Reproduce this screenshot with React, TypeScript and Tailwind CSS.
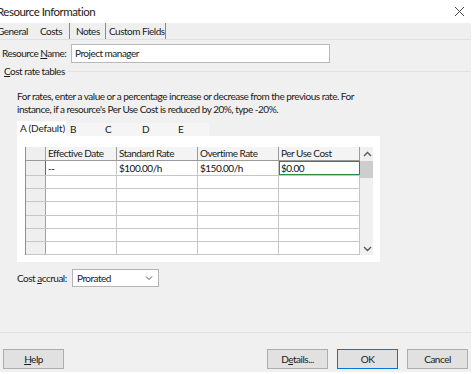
import React from 'react';

const font = { fontFamily: 'Lato, "Noto Sans", sans-serif' };

const cols = ['Effective Date', 'Standard Rate', 'Overtime Rate', 'Per Use Cost'];
const widths = ['w-[71px]', 'w-[81px]', 'w-[81px]', 'w-[81px]'];

const GridRow = ({ cells, first, h }: { cells: string[]; first?: boolean; h: string }) => (
  <div className={`flex ${h} border-b border-[#c6c6c6]`}>
    <div className={`w-[20px] bg-[#efefef] border-r ${first ? 'border-[#2e8b3e]' : 'border-[#a0a0a0]'}`} />
    {cells.map((c, i) => (
      <div
        key={i}
        className={`${widths[i]} border-r border-[#c6c6c6] px-[2px] text-[10px] leading-[14px] whitespace-nowrap text-[#111] ${
          first && i === 3 ? 'outline outline-[#2e8b3e] -outline-offset-1 bg-white' : ''
        }`}
      >
        {c}
      </div>
    ))}
  </div>
);

export default function App() {
  const empty = ['', '', '', ''];
  return (
    <div
      className="w-[474px] h-[374px] bg-white text-[#1a1a1a] overflow-hidden whitespace-nowrap tracking-[-0.5px]"
      style={font}
    >
      <div className="h-[23px] flex items-center justify-between pr-[8px]">
        <span className="-ml-[3px] text-[11.5px] text-[#222]">Resource Information</span>
        <svg width="11" height="11" viewBox="0 0 11 11" className="mr-[1px]">
          <path d="M1 1 L10 10 M10 1 L1 10" stroke="#444" strokeWidth="1" />
        </svg>
      </div>
      <div className="w-[471px] h-[349px] bg-[#f0f0f0] flex flex-col">
        <div className="h-[17px] flex items-center text-[10px] border-b border-[#e0e0e0] bg-[#efefef]">
          <span className="-ml-[3px] w-[43px]">General</span>
          <span className="w-[29px]">Costs</span>
          <span className="h-[16px] border-l border-[#8a8a8a]" />
          <span className="w-[35px] pl-[6px]">Notes</span>
          <span className="h-[16px] border-l border-[#8a8a8a]" />
          <span className="w-[59px] pl-[3px]">Custom Fields</span>
          <span className="h-[16px] border-l border-[#8a8a8a]" />
        </div>
        <div className="h-[26px] flex items-center text-[10px]">
          <span className="ml-[2px] w-[69px]">
            Resource <u>N</u>ame:
          </span>
          <div className="w-[259px] h-[19px] bg-white border border-[#b9b9b9] px-[3px] leading-[17px]">
            Project manager
          </div>
        </div>
        <div className="flex items-center h-[10px] text-[10px] leading-[10px]">
          <span className="pl-[4px] pr-[3px] bg-[#f0f0f0]">
            <u>C</u>ost rate tables
          </span>
          <div className="flex-1 border-t border-[#e0e0e0]" />
        </div>
        <div className="px-[17px] pt-[14px] text-[10px] leading-[13px] text-[#1a1a1a]">
          <p>For rates, enter a value or a percentage increase or decrease from the previous rate. For</p>
          <p>instance, if a resource's Per Use Cost is reduced by 20%, type -20%.</p>
        </div>
        <div className="ml-[17px] mt-[5px] flex items-end h-[15px] text-[10px] leading-[14px]">
          <div className="w-[49px] h-[15px] bg-white pl-[3px] tracking-[-0.2px]">A (Default)</div>
          <div className="w-[143px] h-[13px] leading-[13px] bg-[#f5f5f5] flex">
            <span className="w-[36px] pl-[4px]">B</span>
            <span className="w-[36px] pl-[3px]">C</span>
            <span className="w-[36px] pl-[4px]">D</span>
            <span className="w-[35px] pl-[4px]">E</span>
          </div>
        </div>
        <div className="ml-[17px] w-[363px] h-[126px] bg-white pt-[11px] pl-[8px]">
          <div className="flex w-[348px] h-[108px] overflow-hidden border-l border-[#8f8f8f]">
            <div className="flex flex-col">
              <div className="flex h-[14px] border-b border-[#9a9a9a]">
                <div className="w-[20px] bg-[#efefef] border-r border-[#a0a0a0]" />
                {cols.map((c, i) => (
                  <div
                    key={c}
                    className={`${widths[i]} bg-[#f4f4f4] border-r border-[#9a9a9a] px-[2px] text-[10px] leading-[13px]`}
                  >
                    {c}
                  </div>
                ))}
              </div>
              <GridRow cells={['--', '$100.00/h', '$150.00/h', '$0.00']} first h="h-[15px]" />
              {[0, 1, 2, 3, 4].map((i) => (
                <GridRow key={i} cells={empty} h="h-[14px]" />
              ))}
              <GridRow cells={empty} h="h-[14px]" />
            </div>
            <div className="w-[14px] bg-[#f0f0f0] flex flex-col items-center">
              <svg width="9" height="14" viewBox="0 0 9 14">
                <path d="M1 9 L4.5 5.5 L8 9" stroke="#555" strokeWidth="1.3" fill="none" />
              </svg>
              <div className="w-[14px] h-[17px] bg-[#cdcdcd]" />
              <div className="flex-1" />
              <svg width="9" height="12" viewBox="0 0 9 12">
                <path d="M1 4 L4.5 7.5 L8 4" stroke="#555" strokeWidth="1.3" fill="none" />
              </svg>
            </div>
          </div>
        </div>
        <div className="flex items-center ml-[17px] mt-[7px] h-[18px] text-[10px]">
          <span className="w-[55px]">
            Cost <u>a</u>ccrual:
          </span>
          <div className="w-[87px] h-[18px] bg-white border border-[#b4b4b4] flex items-center justify-between pl-[4px] pr-[5px]">
            <span>Prorated</span>
            <svg width="8" height="6" viewBox="0 0 8 6">
              <path d="M1 1.5 L4 4.5 L7 1.5" stroke="#555" strokeWidth="1" fill="none" />
            </svg>
          </div>
        </div>
        <div className="mt-[45px] border-t border-[#e2e2e2]" />
        <div className="mt-[16px] flex items-center text-[10px]">
          <button className="ml-[3px] w-[61px] h-[20px] bg-[#e1e1e1] border border-[#adadad]">
            <u>H</u>elp
          </button>
          <div className="flex-1" />
          <button className="w-[61px] h-[20px] bg-[#e1e1e1] border border-[#adadad]">
            D<u>e</u>tails...
          </button>
          <button className="ml-[9px] w-[61px] h-[20px] bg-[#e1e1e1] border border-[#0078d7]">OK</button>
          <button className="ml-[9px] mr-[3px] w-[61px] h-[20px] bg-[#e1e1e1] border border-[#adadad]">
            Cancel
          </button>
        </div>
      </div>
    </div>
  );
}
